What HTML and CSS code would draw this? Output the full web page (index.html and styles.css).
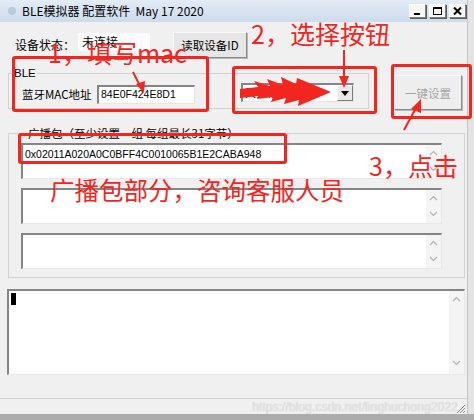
FILE: index.html
```html
<!DOCTYPE html>
<html>
<head>
<meta charset="utf-8">
<link rel="stylesheet" href="styles.css">
</head>
<body>
<div class="window">
  <div class="titlebar">
    <span class="app-icon"></span>
    <span class="title">BLE模拟器 配置软件&nbsp;&nbsp;May 17 2020</span>
    <div class="tbtns">
      <span class="tbtn"><svg width="15" height="12" viewBox="0 0 15 12"><rect x="4" y="8" width="6" height="2" fill="#000"/></svg></span>
      <span class="tbtn"><svg width="15" height="12" viewBox="0 0 15 12"><rect x="3.5" y="2.5" width="8" height="7" fill="none" stroke="#000" stroke-width="1"/><rect x="3" y="2" width="9" height="2" fill="#000"/></svg></span>
      <span class="tbtn"><svg width="15" height="12" viewBox="0 0 15 12"><path d="M4 2.5 L11 9.5 M11 2.5 L4 9.5" stroke="#000" stroke-width="2"/></svg></span>
    </div>
  </div>
  <div class="client">
    <div class="status-row">
      <span class="lbl">设备状态：</span>
      <span class="status-val">未连接</span>
      <span class="btn read-btn">读取设备ID</span>
    </div>
    <div class="ble-row">
      <fieldset class="group ble-group">
        <legend>BLE</legend>
        <div class="ble-body">
          <span class="mac-lbl">蓝牙MAC地址</span>
          <div class="edit mac-edit">84E0F424E8D1</div>
          <div class="combo">
            <span class="combo-text">天猫精灵</span>
            <span class="combo-btn"><svg width="8" height="5" viewBox="0 0 8 5"><path d="M0 0 H8 L4 5 Z" fill="#000"/></svg></span>
          </div>
        </div>
      </fieldset>
      <span class="btn set-btn">一键设置</span>
    </div>
    <fieldset class="group adv-group">
      <legend>广播包（至少设置一组 每组最长31字节）</legend>
      <div class="adv-list">
        <div class="memo adv-memo">
          <div class="memo-text">0x02011A020A0C0BFF4C0010065B1E2CABA948</div>
          <div class="vscroll"><svg class="chev" width="9" height="6" viewBox="0 0 9 6"><path d="M1 5 L4.5 1.5 L8 5" fill="none" stroke="#b4b4b4" stroke-width="1.2"/></svg><svg class="chev" width="9" height="6" viewBox="0 0 9 6"><path d="M1 1 L4.5 4.5 L8 1" fill="none" stroke="#b4b4b4" stroke-width="1.2"/></svg></div>
        </div>
        <div class="memo adv-memo">
          <div class="memo-text"></div>
          <div class="vscroll"><svg class="chev" width="9" height="6" viewBox="0 0 9 6"><path d="M1 5 L4.5 1.5 L8 5" fill="none" stroke="#b4b4b4" stroke-width="1.2"/></svg><svg class="chev" width="9" height="6" viewBox="0 0 9 6"><path d="M1 1 L4.5 4.5 L8 1" fill="none" stroke="#b4b4b4" stroke-width="1.2"/></svg></div>
        </div>
        <div class="memo adv-memo">
          <div class="memo-text"></div>
          <div class="vscroll"><svg class="chev" width="9" height="6" viewBox="0 0 9 6"><path d="M1 5 L4.5 1.5 L8 5" fill="none" stroke="#b4b4b4" stroke-width="1.2"/></svg><svg class="chev" width="9" height="6" viewBox="0 0 9 6"><path d="M1 1 L4.5 4.5 L8 1" fill="none" stroke="#b4b4b4" stroke-width="1.2"/></svg></div>
        </div>
      </div>
    </fieldset>
    <div class="memo log">
      <div class="memo-text"><span class="caret"></span></div>
      <div class="vscroll log-scroll"><svg class="chev" width="9" height="6" viewBox="0 0 9 6"><path d="M1 5 L4.5 1.5 L8 5" fill="none" stroke="#b4b4b4" stroke-width="1.2"/></svg><svg class="chev" width="9" height="6" viewBox="0 0 9 6"><path d="M1 1 L4.5 4.5 L8 1" fill="none" stroke="#b4b4b4" stroke-width="1.2"/></svg></div>
    </div>
  </div>
  <div class="statusbar">
    <span class="watermark">https://blog.csdn.net/linghuchong2022</span>
    <svg class="grip" width="12" height="12" viewBox="0 0 12 12"><path d="M11 3 L3 11 M11 6 L6 11 M11 9 L9 11" stroke="#8a8a8a" stroke-width="1"/></svg>
  </div>
</div>
<div class="shade"></div>

<div class="mark m1"></div>
<div class="mark m2"></div>
<div class="mark m3"></div>
<div class="mark m4"></div>
<svg class="arrows" width="474" height="420" viewBox="0 0 474 420">
  <path d="M133 72 L140 86" stroke="#f2261e" stroke-width="2"/>
  <path d="M136 84 L145 81 L144 93 Z" fill="#f2261e"/>
  <path d="M344 50 L344 78" stroke="#f2261e" stroke-width="2"/>
  <path d="M339 76 L349 76 L344 88 Z" fill="#f2261e"/>
  <path d="M404 130 L416 108" stroke="#f2261e" stroke-width="2"/>
  <path d="M411 109 L421 113 L421 99 Z" fill="#f2261e"/>
  <path d="M240 89 L258 87 L254 81 L270 86 L267 79 L283 85 L281 77 L296 84 L297 78 L331 92 L298 106 L299 100 L284 104 L286 98 L271 102 L273 97 L257 99 L259 96 L240 98 Z" fill="#f2261e"/>
</svg>
<div class="note n1">1，填写mac</div>
<div class="note n2">2，选择按钮</div>
<div class="note n3">3，点击</div>
<div class="note n4">广播包部分，咨询客服人员</div>
</body>
</html>
```
FILE: styles.css
```css
html, body {
  margin: 0;
  padding: 0;
}
body {
  width: 474px;
  height: 420px;
  overflow: hidden;
  position: relative;
  background: #e4e4e4;
  font-family: "Noto Sans CJK SC", "Liberation Sans", sans-serif;
  font-size: 12px;
  color: #000;
}
.window {
  width: 468px;
  height: 414px;
  background: #f0f0f0;
  border-right: 1px solid #c4c4c4;
  box-sizing: border-box;
  display: flex;
  flex-direction: column;
}
.titlebar {
  height: 22px;
  flex: none;
  display: flex;
  align-items: center;
  background: linear-gradient(#e3ecf7, #cddbec);
}
.app-icon {
  width: 8px;
  height: 8px;
  margin-left: 8px;
  border-radius: 50%;
  background: #b9c9de;
}
.title {
  margin-left: 6px;
  font-size: 12px;
  line-height: 14px;
  white-space: nowrap;
}
.tbtns {
  margin-left: auto;
  margin-right: 1px;
  display: flex;
  gap: 3px;
}
.tbtn {
  width: 17px;
  height: 14px;
  box-sizing: border-box;
  background: #f6f6f6;
  border: 1px solid;
  border-color: #ffffff #808080 #808080 #ffffff;
  box-shadow: 1px 1px 0 #5a5a5a;
  display: flex;
  align-items: center;
  justify-content: center;
}
.client {
  flex: 1;
  display: flex;
  flex-direction: column;
  align-items: flex-start;
}
.status-row {
  margin-top: 10px;
  height: 26px;
  padding-left: 15px;
  display: flex;
  align-items: center;
}
.lbl {
  line-height: 16px;
  width: 60px;
}
.status-val {
  margin-left: 3px;
  width: 72px;
  height: 18px;
  line-height: 18px;
  padding-left: 4px;
  box-sizing: border-box;
  background: #fbfbfb;
  align-self: flex-start;
  margin-top: 1px;
}
.btn {
  display: flex;
  align-items: center;
  justify-content: center;
  box-sizing: border-box;
  background: #e6e6e6;
  border: 1px solid;
  border-color: #f8f8f8 #8a8a8a #8a8a8a #f8f8f8;
  box-shadow: 1px 1px 0 #b8b8b8;
  white-space: nowrap;
}
.read-btn {
  margin-left: 23px;
  width: 74px;
  height: 26px;
  font-size: 11.5px;
}
.ble-row {
  margin-top: 8px;
  display: flex;
  align-items: flex-start;
}
.group {
  margin: 0;
  min-width: 0;
  border: 1px solid #d2d2d2;
  box-sizing: border-box;
}
.group legend {
  padding: 0 1px;
  line-height: 14px;
  font-size: 12px;
}
.ble-group {
  margin-left: 8px;
  width: 361px;
  padding: 0;
}
.ble-group legend {
  margin-left: 4px;
  font-family: "Liberation Sans", sans-serif;
  font-size: 11.5px;
}
.ble-body {
  display: flex;
  align-items: flex-start;
  padding: 5px 0 4px 13px;
}
.mac-lbl {
  width: 75px;
  line-height: 19px;
  font-size: 11.5px;
}
.edit {
  box-sizing: border-box;
  background: #fff;
  border-style: solid;
  border-width: 2px 1px 1px 2px;
  border-color: #858585 #e6e6e6 #e6e6e6 #858585;
}
.mac-edit {
  width: 98px;
  height: 19px;
  padding-left: 2px;
  font-family: "Liberation Sans", sans-serif;
  font-size: 10.5px;
  line-height: 15px;
}
.combo {
  margin-left: 46px;
  margin-top: -2px;
  width: 113px;
  height: 19px;
  box-sizing: border-box;
  background: #fff;
  border-style: solid;
  border-width: 2px 1px 1px 2px;
  border-color: #858585 #e6e6e6 #e6e6e6 #858585;
  display: flex;
}
.combo-text {
  flex: 1;
  font-size: 11px;
  line-height: 15px;
  padding-left: 2px;
  overflow: hidden;
  white-space: nowrap;
}
.combo-btn {
  width: 16px;
  box-sizing: border-box;
  background: #e8e8e8;
  border: 1px solid;
  border-color: #fafafa #7c7c7c #7c7c7c #fafafa;
  display: flex;
  align-items: center;
  justify-content: center;
}
.set-btn {
  margin-left: 25px;
  margin-top: 9px;
  width: 68px;
  height: 35px;
  color: #a6a6a6;
  background: #eeeeee;
  font-size: 11.5px;
}
.adv-group {
  margin-top: 16px;
  margin-left: 8px;
  width: 457px;
  padding: 3px 0 8px 12px;
}
.adv-group legend {
  margin-left: 6px;
  font-size: 11.5px;
}
.adv-list {
  display: flex;
  flex-direction: column;
  gap: 9px;
}
.memo {
  display: flex;
  box-sizing: border-box;
  background: #fff;
  border-style: solid;
  border-width: 2px 1px 1px 2px;
  border-color: #858585 #e8e8e8 #e8e8e8 #858585;
}
.adv-memo {
  width: 421px;
  height: 36px;
}
.memo-text {
  flex: 1;
  padding: 2px 2px;
  font-family: "Liberation Sans", sans-serif;
  font-size: 10.5px;
  line-height: 14px;
  white-space: nowrap;
  overflow: hidden;
}
.vscroll {
  width: 15px;
  flex: none;
  background: #f4f4f4;
  display: flex;
  flex-direction: column;
  justify-content: space-between;
  align-items: center;
  padding: 5px 0 6px;
  box-sizing: border-box;
}
.log {
  margin-top: 11px;
  margin-left: 7px;
  width: 458px;
  height: 86px;
}
.log-scroll {
  padding: 5px 0 8px;
}
.caret {
  display: block;
  width: 5px;
  height: 12px;
  margin-top: 0;
  background: #000;
}
.statusbar {
  height: 16px;
  flex: none;
  box-sizing: border-box;
  border-top: 1px solid #d0d0d0;
  display: flex;
  align-items: center;
  justify-content: flex-end;
}
.watermark {
  font-family: "Liberation Sans", sans-serif;
  font-size: 12px;
  color: #e6e6e6;
  text-shadow: 0 0 1px #c4c4c4;
  letter-spacing: 0.1px;
  margin-right: -4px;
}
.grip {
  align-self: flex-end;
  margin-right: 1px;
}
.shade {
  height: 6px;
  background: #acacac;
}
.mark {
  position: absolute;
  box-sizing: border-box;
  border: 3px solid #f2261e;
  border-radius: 3px;
}
.m1 { left: 12px; top: 56px; width: 197px; height: 56px; }
.m2 { left: 232px; top: 66px; width: 145px; height: 48px; }
.m3 { left: 391px; top: 64px; width: 81px; height: 55px; }
.m4 { left: 18px; top: 133px; width: 269px; height: 31px; }
.arrows {
  position: absolute;
  left: 0;
  top: 0;
  pointer-events: none;
}
.note {
  position: absolute;
  color: #f2261e;
  font-family: "Noto Sans CJK SC", sans-serif;
  font-size: 25px;
  line-height: 1;
  white-space: nowrap;
}
.n1 { left: 48px; top: 40px; }
.n2 { left: 251px; top: 21px; }
.n3 { left: 369px; top: 153px; }
.n4 { left: 50px; top: 178px; font-size: 24.5px; }
```
